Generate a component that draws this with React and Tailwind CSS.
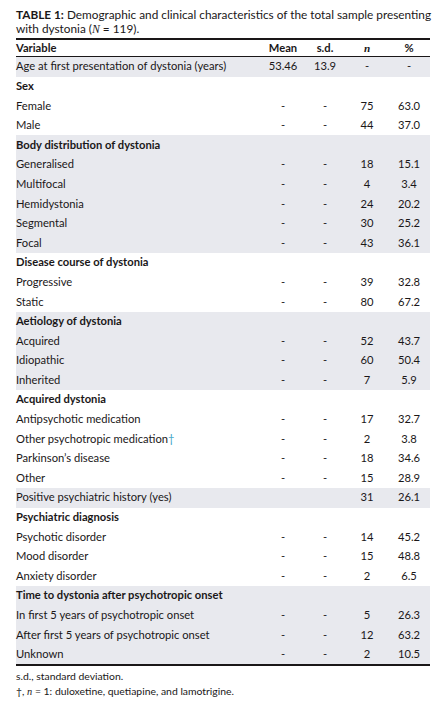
import React from "react";

const rows = [
  { t: "Age at first presentation of dystonia (years)", v: ["53.46", "13.9", "-", "-"], s: true },
  { t: "Sex", h: true },
  { t: "Female", v: ["-", "-", "75", "63.0"] },
  { t: "Male", v: ["-", "-", "44", "37.0"] },
  { t: "Body distribution of dystonia", h: true, s: true },
  { t: "Generalised", v: ["-", "-", "18", "15.1"], s: true },
  { t: "Multifocal", v: ["-", "-", "4", "3.4"], s: true },
  { t: "Hemidystonia", v: ["-", "-", "24", "20.2"], s: true },
  { t: "Segmental", v: ["-", "-", "30", "25.2"], s: true },
  { t: "Focal", v: ["-", "-", "43", "36.1"], s: true },
  { t: "Disease course of dystonia", h: true },
  { t: "Progressive", v: ["-", "-", "39", "32.8"] },
  { t: "Static", v: ["-", "-", "80", "67.2"] },
  { t: "Aetiology of dystonia", h: true, s: true },
  { t: "Acquired", v: ["-", "-", "52", "43.7"], s: true },
  { t: "Idiopathic", v: ["-", "-", "60", "50.4"], s: true },
  { t: "Inherited", v: ["-", "-", "7", "5.9"], s: true },
  { t: "Acquired dystonia", h: true },
  { t: "Antipsychotic medication", v: ["-", "-", "17", "32.7"] },
  { t: "Other psychotropic medication", dag: true, v: ["-", "-", "2", "3.8"] },
  { t: "Parkinson’s disease", v: ["-", "-", "18", "34.6"] },
  { t: "Other", v: ["-", "-", "15", "28.9"] },
  { t: "Positive psychiatric history (yes)", v: ["", "", "31", "26.1"], s: true },
  { t: "Psychiatric diagnosis", h: true },
  { t: "Psychotic disorder", v: ["-", "-", "14", "45.2"] },
  { t: "Mood disorder", v: ["-", "-", "15", "48.8"] },
  { t: "Anxiety disorder", v: ["-", "-", "2", "6.5"] },
  { t: "Time to dystonia after psychotropic onset", h: true, s: true },
  { t: "In first 5 years of psychotropic onset", v: ["-", "-", "5", "26.3"], s: true },
  { t: "After first 5 years of psychotropic onset", v: ["-", "-", "12", "63.2"], s: true },
  { t: "Unknown", v: ["-", "-", "2", "10.5"], s: true },
];

const font = { fontFamily: "Lato, 'Open Sans', sans-serif" };
const serif = { fontFamily: "'Liberation Serif', serif" };

export default function App() {
  return (
    <div className="w-[447px] h-[708px] bg-white text-[#1a1718] px-[16px] pt-[8px]" style={font}>
      <div className="w-[420px] text-[11.8px] leading-[13.5px] whitespace-nowrap">
        <div>
          <span className="font-bold">TABLE 1:</span> Demographic and clinical characteristics of the total sample presenting
        </div>
        <div>
          with dystonia (<span className="italic" style={serif}>N</span> = 119).
        </div>
      </div>
      <div className="mt-[2px] w-[414px] border-t-2 border-[#1a1718]">
        <div className="grid grid-cols-[246px_42px_42px_42px_42px] h-[17px] items-center text-[11.2px] font-bold border-b border-[#1a1718]">
          <div>Variable</div>
          <div className="text-center">Mean</div>
          <div className="text-center">s.d.</div>
          <div className="text-center italic" style={serif}>n</div>
          <div className="text-center">%</div>
        </div>
        {rows.map((r, i) => (
          <div
            key={i}
            className={
              "grid grid-cols-[246px_42px_42px_42px_42px] h-[19.6px] items-center text-[11.2px] " +
              (r.s ? "bg-[#e8e9ee]" : "bg-white")
            }
          >
            <div className={r.h ? "font-bold" : ""}>
              {r.t}
              {r.dag && <span className="text-[#3aa3c6]">†</span>}
            </div>
            {r.v &&
              r.v.map((x, j) => (
                <div key={j} className="text-center">
                  {x}
                </div>
              ))}
          </div>
        ))}
        <div className="border-t-2 border-[#1a1718]"></div>
      </div>
      <div className="mt-[3px] text-[10.4px] leading-[15px]">
        <div>s.d., standard deviation.</div>
        <div>
          †, <span className="italic" style={serif}>n</span> = 1: duloxetine, quetiapine, and lamotrigine.
        </div>
      </div>
    </div>
  );
}
